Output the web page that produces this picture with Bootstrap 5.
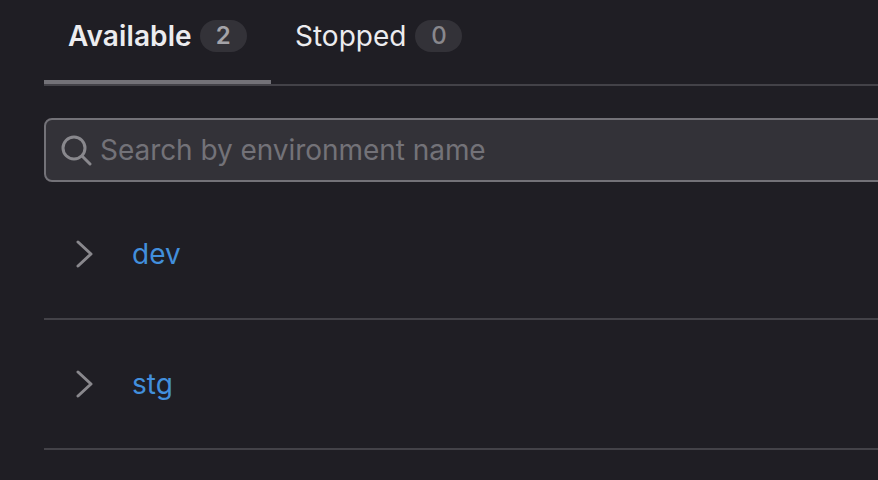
<!DOCTYPE html>
<html lang="en">
<head>
<meta charset="utf-8">
<title>Environments</title>
<link href="https://cdn.jsdelivr.net/npm/bootstrap@5.3.0/dist/css/bootstrap.min.css" rel="stylesheet">
<style>
html, body { background: #1f1e24; height: 480px; }
body { font-family: Inter, "Liberation Sans", sans-serif; font-size: 28px; padding-left: 44px; overflow: hidden; }
.env-tabs { height: 86px; border-bottom: 2px solid #434248; }
.env-tab { width: 227px; height: 84px; padding: 0 0 8px 24px; gap: 9px; color: #ececef; border-bottom: 4px solid transparent; }
.env-tab.env-active { font-weight: 600; letter-spacing: 0.1px; gap: 8px; border-bottom-color: #737278; }
.env-tab-2 { width: auto; padding-left: 24px; }
.env-count { width: 47px; height: 32px; border-radius: 16px; background: #333238; color: #89888d; font-size: 24px; line-height: 32px; font-weight: 500; text-align: center; }
.env-active .env-count { color: #a4a3a8; font-weight: 600; }
.env-search { margin-top: 32px; height: 64px; width: calc(100% + 24px); background: #333238; border: 2px solid #737278; border-radius: 8px; padding-left: 14px; gap: 8px; }
.env-search input { flex: 1; background: transparent; border: 0; outline: 0; padding: 0; color: #ececef; font: inherit; min-width: 0; letter-spacing: -0.05px; }
.env-search input::placeholder { color: #737278; opacity: 1; }
.env-row { height: 130px; border-bottom: 2px solid #434248; padding-left: 31px; gap: 37px; }
.env-row a { color: #428fdc; text-decoration: none; }
.env-first { margin-top: 6px; height: 132px; padding-top: 1px; }
</style>
</head>
<body>
<div class="env-tabs d-flex">
  <div class="env-tab env-active d-flex align-items-center">Available <span class="env-count">2</span></div>
  <div class="env-tab env-tab-2 d-flex align-items-center">Stopped <span class="env-count">0</span></div>
</div>
<div class="env-search d-flex align-items-center">
  <svg width="32" height="32" viewBox="0 0 32 32" fill="none" stroke="#89888d" stroke-width="3" stroke-linecap="round"><circle cx="14" cy="14" r="11"/><path d="M22 22l8 8"/></svg>
  <input type="text" placeholder="Search by environment name">
</div>
<div class="env-row env-first d-flex align-items-center">
  <svg width="20" height="28" viewBox="0 0 20 28" fill="none" stroke="#89888d" stroke-width="3" stroke-linecap="round" stroke-linejoin="round"><path d="M3 2l13 12L3 26"/></svg>
  <a href="#">dev</a>
</div>
<div class="env-row d-flex align-items-center">
  <svg width="20" height="28" viewBox="0 0 20 28" fill="none" stroke="#89888d" stroke-width="3" stroke-linecap="round" stroke-linejoin="round"><path d="M3 2l13 12L3 26"/></svg>
  <a href="#">stg</a>
</div>
<script src="https://cdn.jsdelivr.net/npm/bootstrap@5.3.0/dist/js/bootstrap.bundle.min.js"></script>
</body>
</html>
